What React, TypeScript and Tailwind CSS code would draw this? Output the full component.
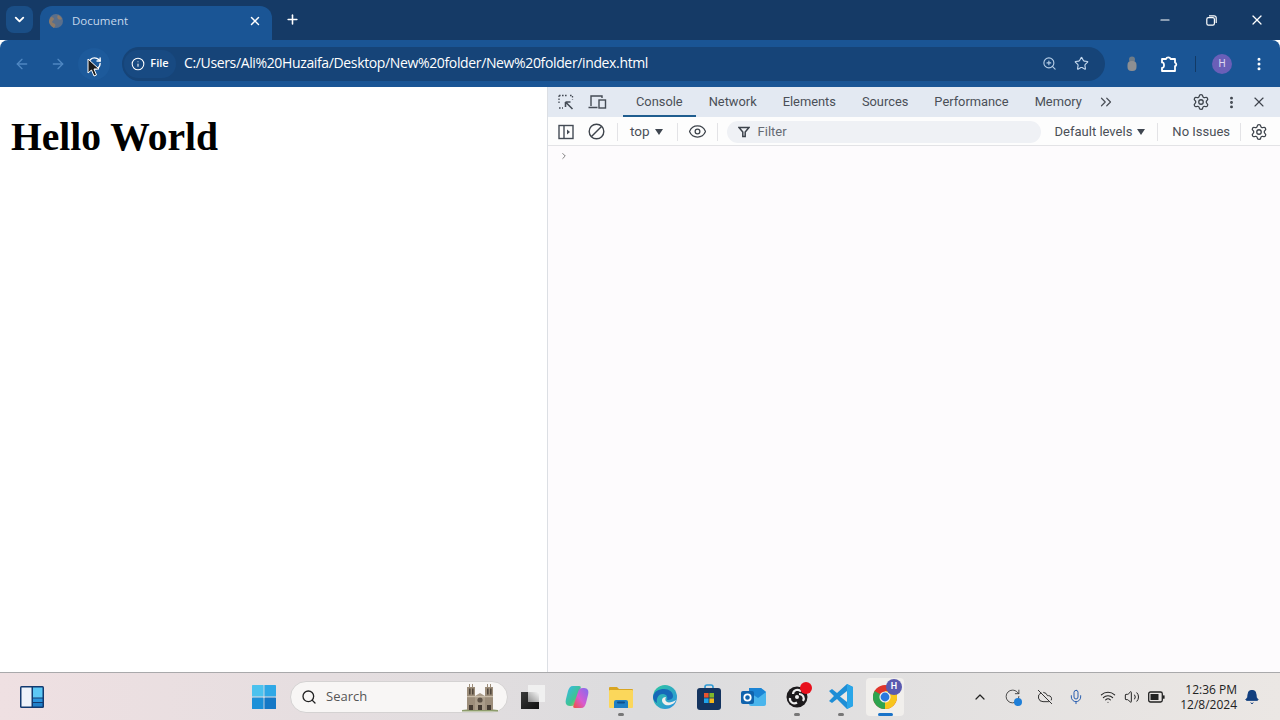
import {
  ArrowLeft,
  ArrowRight,
  Bell,
  ChevronDown,
  ChevronRight,
  ChevronUp,
  ChevronsRight,
  CloudOff,
  EllipsisVertical,
  Eye,
  Info,
  Mic,
  Minus,
  Plus,
  RotateCw,
  Search,
  Settings,
  Star,
  Volume2,
  Wifi,
  X,
  ZoomIn,
} from "lucide-react";

const devtoolsTabs = ["Console", "Network", "Elements", "Sources", "Performance", "Memory"];

function Globe() {
  return (
    <svg width="16" height="16" viewBox="0 0 16 16">
      <circle cx="8" cy="8" r="7" fill="#5a6f8b" />
      <path d="M3 4c2 0 3 1 3 2S4 8 4 9s2 1 3 2 0 3-1 4c-2-1-4-3-5-6 0-2 1-4 2-5z" fill="#8d7a68" />
      <path d="M10 2c2 1 3 2 4 4-1 1-3 1-4 0s-1-3 0-4z" fill="#8d7a68" />
    </svg>
  );
}

function InspectIcon() {
  return (
    <svg width="16" height="16" viewBox="0 0 16 16" fill="none" stroke="#444b55" strokeWidth="1.3">
      <path d="M1 1.5h9M1 1.5v9M1 14h4M12 1.5h2.5v4" strokeDasharray="1.6 1.4" />
      <path d="M7.5 8h5M7.5 8v5M7.5 8l7 7" strokeWidth="1.6" />
    </svg>
  );
}

function DeviceIcon() {
  return (
    <svg width="19" height="16" viewBox="0 0 19 16" fill="none" stroke="#444b55" strokeWidth="1.4">
      <path d="M3 12V2h11v2M0.5 13.5h9" />
      <rect x="11" y="6" width="6.5" height="8" />
    </svg>
  );
}

function SidebarIcon() {
  return (
    <svg width="16" height="16" viewBox="0 0 16 16" fill="none" stroke="#444b55" strokeWidth="1.4">
      <rect x="1" y="1.5" width="14" height="13" />
      <path d="M6 1.5v13" />
      <path d="M9 5.5l3 2.5-3 2.5z" fill="#444b55" stroke="none" />
    </svg>
  );
}

function ClearIcon() {
  return (
    <svg width="17" height="17" viewBox="0 0 17 17" fill="none" stroke="#3d434b" strokeWidth="1.4">
      <circle cx="8.5" cy="8.5" r="7.3" />
      <path d="M3.5 13.5l10-10" />
    </svg>
  );
}

function FunnelIcon() {
  return (
    <svg width="12" height="12" viewBox="0 0 12 12" fill="none" stroke="#3d434b" strokeWidth="1.5">
      <path d="M1 1.5h10L7.2 6v4.5H4.8V6z" />
    </svg>
  );
}

function RestoreIcon() {
  return (
    <svg width="11" height="11" viewBox="0 0 11 11" fill="none" stroke="#fff" strokeWidth="1.2">
      <rect x="0.8" y="2.6" width="7.6" height="7.6" rx="1.6" />
      <path d="M3 0.8h5.2a2 2 0 0 1 2 2V8" />
    </svg>
  );
}

function ExtensionIcon() {
  return (
    <svg width="18" height="18" viewBox="0 0 18 18" fill="none" stroke="#fff" strokeWidth="1.8" strokeLinejoin="round">
      <path d="M2 4h4a2.4 2.4 0 0 1 4.6 0H15v3.6a1.9 1.9 0 0 1 0 3.6V16H2v-3.2c2-.2 2-.8 2-2.6s0-2.6-2-2.8z" />
    </svg>
  );
}

function ExtensionBead() {
  return (
    <svg width="10" height="15" viewBox="0 0 10 15">
      <circle cx="5" cy="3.5" r="3" fill="#6f7c88" />
      <rect x="0.5" y="5" width="9" height="10" rx="4" fill="#8d8f92" />
    </svg>
  );
}

function Caret() {
  return <span className="ml-[5px] h-0 w-0 border-x-[4.5px] border-t-[6px] border-x-transparent border-t-[#3f4650]" />;
}

function Cursor() {
  return (
    <svg className="absolute left-[87px] top-[58px]" width="13" height="19" viewBox="0 0 13 19">
      <path d="M1 1v14l3.5-3 2.5 6 2.5-1-2.5-6H12z" fill="#1b1b1b" stroke="#fff" strokeWidth="1" />
    </svg>
  );
}

function WidgetsIcon() {
  return (
    <svg width="24" height="22" viewBox="0 0 24 22">
      <rect width="24" height="22" rx="1.5" fill="#123a70" />
      <rect x="1.5" y="1.5" width="10" height="19" fill="#eef3fa" />
      <rect x="13" y="1.5" width="9.5" height="10" fill="#5cc8f5" />
      <rect x="13" y="12.5" width="9.5" height="3.5" fill="#2b94dd" />
      <rect x="13" y="17" width="9.5" height="3.5" fill="#1f7fc9" />
    </svg>
  );
}

function WindowsIcon() {
  return (
    <svg width="24" height="24" viewBox="0 0 24 24">
      <rect width="11.6" height="11.6" rx="0.6" fill="#4cc2ee" />
      <rect x="12.4" width="11.6" height="11.6" rx="0.6" fill="#2fa8e6" />
      <rect y="12.4" width="11.6" height="11.6" rx="0.6" fill="#1c90d8" />
      <rect x="12.4" y="12.4" width="11.6" height="11.6" rx="0.6" fill="#1578c6" />
    </svg>
  );
}

function Cathedral() {
  return (
    <svg width="36" height="30" viewBox="0 0 36 30">
      <path d="M0 28q18-3 36 0v1.5H0z" fill="#8d9c6c" />
      <path d="M5 28V5h2V2h1v3h2V2h1v3h2v9h10V5h2V2h1v3h2V2h1v3h2v23z" fill="#9c8d7a" />
      <path d="M13 14l5-3 5 3v14H13z" fill="#ab9d8a" />
      <path d="M7 6.5h1.6v6H7zM10 6.5h1.6v6H10zM25 6.5h1.6v6H25zM28 6.5h1.6v6H28z" fill="#51463b" />
      <circle cx="18" cy="18" r="2.6" fill="#5c5145" />
      <path d="M7 23h4v5H7zM16 23h4v5h-4zM25 23h4v5h-4z" fill="#443a31" />
      <path d="M5 14h26v1.2H5z" fill="#c9bca9" />
    </svg>
  );
}

function TaskViewIcon() {
  return (
    <svg width="24" height="24" viewBox="0 0 24 24">
      <defs>
        <linearGradient id="tv1" x1="0" y1="1" x2="1" y2="0">
          <stop offset="0" stopColor="#8f8f8f" />
          <stop offset="1" stopColor="#f7f7f7" />
        </linearGradient>
        <linearGradient id="tv2" x1="0" y1="0" x2="1" y2="1">
          <stop offset="0" stopColor="#3a3a3a" />
          <stop offset="1" stopColor="#111" />
        </linearGradient>
      </defs>
      <rect x="7" y="0" width="17" height="17" fill="#f0f0f0" />
      <rect x="0" y="7" width="18" height="17" fill="url(#tv2)" />
      <rect x="7" y="7" width="11" height="10" fill="url(#tv1)" />
    </svg>
  );
}

function CopilotIcon() {
  return (
    <svg width="24" height="24" viewBox="0 0 24 24">
      <defs>
        <linearGradient id="cp1" x1="0" y1="0" x2="1" y2="1">
          <stop offset="0" stopColor="#35b8ee" />
          <stop offset="0.6" stopColor="#3fc48f" />
          <stop offset="1" stopColor="#f2c230" />
        </linearGradient>
        <linearGradient id="cp2" x1="1" y1="0" x2="0" y2="1">
          <stop offset="0" stopColor="#7d6df0" />
          <stop offset="0.55" stopColor="#d85ad0" />
          <stop offset="1" stopColor="#f0503a" />
        </linearGradient>
      </defs>
      <path d="M8 1h6c2 0 2 1 1.500 2.500L11 17c-1 3-2 4-5 4H5c-4 0-5-3-4-7l2-8c1-3 2-5 5-5z" fill="url(#cp1)" />
      <path d="M16 23h-6c-2 0-2-1-1.500-2.500L13 7c1-3 2-4 5-4h1c4 0 5 3 4 7l-2 8c-1 3-2 5-5 5z" fill="url(#cp2)" />
    </svg>
  );
}

function FolderIcon() {
  return (
    <svg width="24" height="22" viewBox="0 0 24 22">
      <path d="M0 2a1 1 0 0 1 1-1h7l2 2h13a1 1 0 0 1 1 1v3H0z" fill="#d9a521" />
      <rect y="4" width="24" height="18" rx="1" fill="#fbd75b" />
      <path d="M5 22v-6a2 2 0 0 1 2-2h10a2 2 0 0 1 2 2v6z" fill="#1f7fc4" />
      <rect x="8" y="15.5" width="8" height="2" rx="1" fill="#0f4f8a" />
    </svg>
  );
}

function EdgeIcon() {
  return (
    <svg width="24" height="24" viewBox="0 0 24 24">
      <defs>
        <linearGradient id="eg1" x1="0" y1="0" x2="1" y2="1">
          <stop offset="0" stopColor="#30c8a0" />
          <stop offset="1" stopColor="#2a8fe0" />
        </linearGradient>
      </defs>
      <circle cx="12" cy="12" r="12" fill="url(#eg1)" />
      <path d="M0 12C1 6 6 4 11 4s9 3 9 7c0 3-3 4-6 4 1-2 0-6-4-6-5 0-7 5-6 9-2-1-4-3-4-6z" fill="#1668b8" />
      <path d="M9 15c0 4 4 6 8 5s5-3 6-5c-3 2-7 3-9 2s-2-3-1-5c-2 0-4 1-4 3z" fill="#f1efec" />
    </svg>
  );
}

function StoreIcon() {
  return (
    <svg width="24" height="26" viewBox="0 0 24 26">
      <path d="M8 5V3a2 2 0 0 1 2-2h4a2 2 0 0 1 2 2v2" fill="none" stroke="#2e9bd6" strokeWidth="1.6" />
      <rect y="4" width="24" height="22" rx="3" fill="#14345f" />
      <rect x="7" y="9" width="4.6" height="4.6" fill="#e8542f" />
      <rect x="12.4" y="9" width="4.6" height="4.6" fill="#7fb82a" />
      <rect x="7" y="14.4" width="4.6" height="4.6" fill="#1fa3e8" />
      <rect x="12.4" y="14.4" width="4.6" height="4.6" fill="#f4b81c" />
    </svg>
  );
}

function OutlookIcon() {
  return (
    <svg width="25" height="22" viewBox="0 0 25 22">
      <path d="M8 2h12l5 4v12a2 2 0 0 1-2 2H10a2 2 0 0 1-2-2z" fill="#4ab5ec" />
      <path d="M8 2h12l5 4-8 6-9-6z" fill="#1b84d4" />
      <rect x="0" y="5" width="13" height="13" rx="2" fill="#0f63ad" />
      <circle cx="6.5" cy="11.5" r="3.2" fill="none" stroke="#fff" strokeWidth="1.8" />
    </svg>
  );
}

function ObsIcon() {
  return (
    <div className="relative h-6 w-6">
      <svg width="24" height="24" viewBox="0 0 24 24">
        <circle cx="12" cy="12" r="10.5" fill="#1c1a1c" />
        <path d="M8 9a4.500 4.500 0 0 1 8-2.500" fill="none" stroke="#eee" strokeWidth="2.200" />
        <path d="M12 17.500a4.500 4.500 0 0 1-7-4.500" fill="none" stroke="#eee" strokeWidth="2.200" />
        <path d="M14 9a4.500 4.500 0 0 1 4 7" fill="none" stroke="#eee" strokeWidth="2.200" />
        <circle cx="12" cy="12" r="2" fill="#eee" />
      </svg>
      <span className="absolute -right-[3px] -top-[3px] h-3 w-3 rounded-full bg-[#e8101c]" />
    </div>
  );
}

function VsCodeIcon() {
  return (
    <svg width="24" height="25" viewBox="0 0 24 25">
      <path d="M18 0l6 3v19l-6 3-10-10-5 4-3-2 5-5-5-5 3-2 5 4z" fill="#1e8ed6" />
      <path d="M18 0l6 3v19l-6 3z" fill="#2aa6e8" />
      <path d="M18 7l-7 5.500 7 5.500z" fill="#eae8e5" />
    </svg>
  );
}

function ChromeIcon() {
  return (
    <div className="relative h-6 w-6">
      <svg width="24" height="24" viewBox="0 0 24 24">
        <circle cx="12" cy="12" r="12" fill="#e0352b" />
        <path d="M12 12L1.600 6A12 12 0 0 0 12 24z" fill="#2ea44f" />
        <path d="M12 12v12A12 12 0 0 0 22.400 6H12z" fill="#f7c51e" />
        <circle cx="12" cy="12" r="5.600" fill="#f2f2f2" />
        <circle cx="12" cy="12" r="4.400" fill="#2b78de" />
      </svg>
      <span className="absolute -right-[5px] -top-[6px] flex h-4 w-4 items-center justify-center rounded-full bg-[#5a5ab0] text-[9px] font-semibold text-white">
        H
      </span>
    </div>
  );
}

function SyncIcon() {
  return (
    <div className="relative">
      <RotateCw size={17} strokeWidth={1.2} color="#333" />
      <span className="absolute -bottom-px -right-px h-2 w-2 rounded-full bg-[#1f7fd8]" />
    </div>
  );
}

function BatteryIcon() {
  return (
    <svg width="17" height="12" viewBox="0 0 17 12" fill="none">
      <rect x="0.7" y="1" width="13.600" height="10" rx="1.800" stroke="#222" strokeWidth="1.300" />
      <rect x="2.500" y="3" width="8" height="6" fill="#222" />
      <rect x="15" y="4.200" width="1.600" height="3.600" rx="0.600" fill="#222" />
    </svg>
  );
}

function TaskbarApp({
  children,
  running,
  active,
}: {
  children: React.ReactNode;
  running?: boolean;
  active?: boolean;
}) {
  return (
    <div className="flex h-[38px] w-11 justify-center">
      <div className={`relative flex h-full w-[38px] items-center justify-center rounded ${active ? "bg-[#f1efec]" : ""}`}>
        {children}
        {running && <span className="absolute bottom-0 h-[3px] w-[6px] rounded-full bg-[#777]" />}
        {active && <span className="absolute bottom-0 h-[3px] w-[15px] rounded-full bg-[#1a73c8]" />}
      </div>
    </div>
  );
}

export default function App() {
  return (
    <div className="relative flex h-[720px] w-[1280px] flex-col overflow-hidden bg-white font-['Roboto',sans-serif] text-[13px]">
      {/* Title bar */}
      <div className="flex h-[40px] items-end bg-[#153a66] text-white">
        <div className="mb-[7px] ml-[6px] flex h-[27px] w-[27px] items-center justify-center rounded-lg bg-[#1a4e86]">
          <ChevronDown size={15} strokeWidth={3} />
        </div>
        <div className="ml-[7px] flex h-[34px] w-[232px] items-center rounded-t-xl bg-[#1a5595] pb-[5px] pl-2 pr-[10px]">
          <Globe />
          <span className="ml-[8px] flex-1 font-['Open_Sans',sans-serif] text-[11.5px] text-[#c6d8ec]">Document</span>
          <X size={14} strokeWidth={2.5} />
        </div>
        <div className="mb-[13px] ml-[13px]">
          <Plus size={15} strokeWidth={2.5} />
        </div>
        <div className="ml-auto mb-[12px] flex items-center">
          <div className="flex w-[46px] justify-center">
            <Minus size={14} strokeWidth={1.8} />
          </div>
          <div className="flex w-[46px] justify-center">
            <RestoreIcon />
          </div>
          <div className="flex w-[46px] justify-center">
            <X size={16} strokeWidth={1.8} />
          </div>
        </div>
      </div>

      {/* Toolbar */}
      <div className="flex h-[47px] items-center rounded-t-lg bg-[#1a5595] text-white">
        <div className="ml-[14px] flex w-[16px] justify-center text-[#4f87c2]">
          <ArrowLeft size={16} strokeWidth={2} />
        </div>
        <div className="ml-[20px] flex w-[16px] justify-center text-[#4f87c2]">
          <ArrowRight size={16} strokeWidth={2} />
        </div>
        <div className="ml-[12px] flex h-[32px] w-[32px] items-center justify-center rounded-full bg-[#1d5a9b]">
          <RotateCw size={15} strokeWidth={2.2} />
        </div>
        <div className="ml-[12px] flex h-[34px] w-[983px] items-center rounded-full bg-[#164478]">
          <div className="ml-[2px] flex h-[28px] w-[52px] items-center justify-center gap-[5px] rounded-full bg-[#184a82]">
            <Info size={14} strokeWidth={1.8} />
            <span className="font-['Open_Sans',sans-serif] text-[11px] font-semibold">File</span>
          </div>
          <span className="ml-[8px] flex-1 pb-[3px] font-['Open_Sans',sans-serif] text-[14px] tracking-[-0.36px] text-white">
            C:/Users/Ali%20Huzaifa/Desktop/New%20folder/New%20folder/index.html
          </span>
          <ZoomIn size={15} strokeWidth={1.8} className="text-[#b5cde6]" />
          <Star size={15} strokeWidth={1.8} className="ml-[17px] mr-[16px] text-[#c4d8ee]" />
        </div>
        <div className="ml-[22px]">
          <ExtensionBead />
        </div>
        <div className="ml-[23px]">
          <ExtensionIcon />
        </div>
        <span className="ml-[17px] h-[16px] w-px bg-[#123a66]" />
        <span className="ml-[16px] flex h-[20px] w-[20px] items-center justify-center rounded-full bg-[#6a5fb8] text-[10px] text-[#dcd9f0]">
          H
        </span>
        <EllipsisVertical size={16} strokeWidth={2.5} className="ml-[19px]" />
      </div>

      {/* Main */}
      <div className="flex min-h-0 flex-1">
        <div className="w-[547px] pl-[11px] pt-[27px]">
          <h1 className="font-['Liberation_Serif',serif] text-[39.6px] leading-[46px] font-bold text-black">
            Hello World
          </h1>
        </div>
        <div className="flex flex-1 flex-col border-l border-[#dcdfe4] bg-[#fdfbfd] text-[#4a4f57]">
          <div className="flex h-[30px] items-center bg-[#e3e9f2]">
            <div className="ml-[10px] flex w-[16px] justify-center">
              <InspectIcon />
            </div>
            <div className="ml-[14px] flex w-[19px] justify-center">
              <DeviceIcon />
            </div>
            <div className="ml-[16px] flex h-full items-center text-[12.85px]">
              {devtoolsTabs.map((tab, i) => (
                <div
                  key={tab}
                  className={`flex h-full items-center border-y-2 border-t-transparent px-[13px] ${i === 0 ? "border-b-[#1f5d8f]" : "border-b-transparent"}`}
                >
                  {tab}
                </div>
              ))}
            </div>
            <ChevronsRight size={18} strokeWidth={1.6} className="ml-[2px]" />
            <Settings size={18} strokeWidth={1.7} className="ml-[77px] text-[#3d434b]" />
            <EllipsisVertical size={15} strokeWidth={2.6} className="ml-[14px] text-[#3d434b]" />
            <X size={16} strokeWidth={1.7} className="ml-[12px] text-[#3d434b]" />
          </div>
          <div className="flex h-[29px] items-center border-b border-[#e3e3e6] bg-[#fdfdfd] pt-px">
            <div className="ml-[10px]">
              <SidebarIcon />
            </div>
            <div className="ml-[14px]">
              <ClearIcon />
            </div>
            <span className="ml-[12px] h-[18px] w-px bg-[#e3e3e6]" />
            <span className="ml-[12px] text-[13.5px]">top</span>
            <Caret />
            <span className="ml-[14px] h-[18px] w-px bg-[#e3e3e6]" />
            <Eye size={19} strokeWidth={1.6} className="ml-[10px] text-[#3d434b]" />
            <span className="ml-[10px] h-[18px] w-px bg-[#e3e3e6]" />
            <div className="ml-[9px] flex h-[22px] w-[314px] items-center rounded-full bg-[#eff1f5] pl-[11px] text-[#666b73]">
              <FunnelIcon />
              <span className="ml-[8px]">Filter</span>
            </div>
            <span className="ml-[14px]">Default levels</span>
            <Caret />
            <span className="ml-[12px] h-[18px] w-px bg-[#e3e3e6]" />
            <span className="ml-[14px]">No Issues</span>
            <span className="ml-[10px] h-[18px] w-px bg-[#e3e3e6]" />
            <Settings size={18} strokeWidth={1.7} className="ml-[9px] text-[#3d434b]" />
          </div>
          <div className="flex h-[20px] items-center pl-[11px] text-[#666]">
            <ChevronRight size={10} strokeWidth={2} />
          </div>
        </div>
      </div>

      {/* Taskbar */}
      <div className="flex h-[48px] items-center border-t border-[#a9a9ab] bg-gradient-to-r from-[#efe0e2] via-[#dcdcde] to-[#ebe7e4]">
        <div className="ml-[20px]">
          <WidgetsIcon />
        </div>
        <div className="ml-[208px]">
          <WindowsIcon />
        </div>
        <div className="ml-[14px] flex h-[32px] w-[218px] items-center rounded-full border border-[#d4d2d2] bg-[#f8f6f5] pl-[10px] pr-[9px]">
          <Search size={16} strokeWidth={2} className="text-[#222]" />
          <span className="ml-[9px] flex-1 font-['Open_Sans',sans-serif] text-[13px] text-[#555]">Search</span>
          <Cathedral />
        </div>
        <div className="ml-[3px] flex">
          <TaskbarApp>
            <TaskViewIcon />
          </TaskbarApp>
          <TaskbarApp>
            <CopilotIcon />
          </TaskbarApp>
          <TaskbarApp running>
            <FolderIcon />
          </TaskbarApp>
          <TaskbarApp>
            <EdgeIcon />
          </TaskbarApp>
          <TaskbarApp>
            <StoreIcon />
          </TaskbarApp>
          <TaskbarApp>
            <OutlookIcon />
          </TaskbarApp>
          <TaskbarApp running>
            <ObsIcon />
          </TaskbarApp>
          <TaskbarApp running>
            <VsCodeIcon />
          </TaskbarApp>
          <TaskbarApp active>
            <ChromeIcon />
          </TaskbarApp>
        </div>
        <ChevronUp size={16} strokeWidth={1.8} className="ml-[65px] text-[#222]" />
        <div className="ml-[16px]">
          <SyncIcon />
        </div>
        <CloudOff size={16} strokeWidth={1.5} className="ml-[16px] text-[#333]" />
        <Mic size={16} strokeWidth={1.5} className="ml-[15px] text-[#2a5fb0]" />
        <Wifi size={16} strokeWidth={1.6} className="ml-[16px] text-[#222]" />
        <Volume2 size={16} strokeWidth={1.5} className="ml-[8px] text-[#222]" />
        <div className="ml-[8px]">
          <BatteryIcon />
        </div>
        <div className="ml-auto flex flex-col items-end font-['Open_Sans',sans-serif] text-[12px] leading-[15px] text-[#222]">
          <span>12:36 PM</span>
          <span>12/8/2024</span>
        </div>
        <Bell size={16} fill="#123f7f" strokeWidth={1.5} className="ml-[7px] mr-[20px] text-[#123f7f]" />
      </div>

      <Cursor />
    </div>
  );
}
